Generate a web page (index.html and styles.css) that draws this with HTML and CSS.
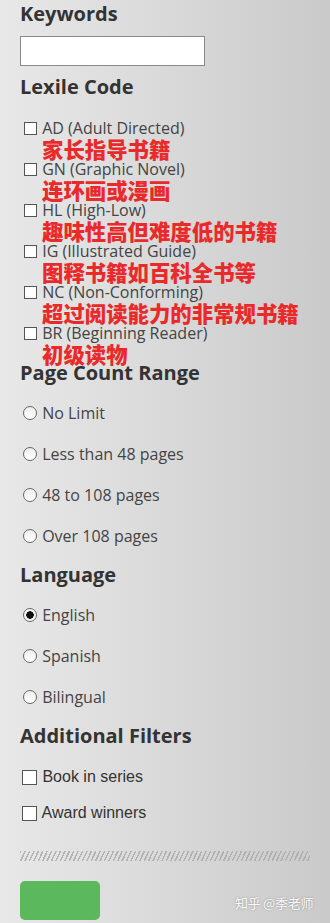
FILE: index.html
```html
<!DOCTYPE html>
<html lang="en">
<head>
  <meta charset="UTF-8">
  <title>Search Filters</title>
  <link rel="stylesheet" href="styles.css">
</head>
<body>
  <div class="sidebar">
    <h2 class="heading">Keywords</h2>
    <input type="text" class="keywords">

    <h2 class="heading lexile-heading">Lexile Code</h2>
    <div class="lexile-list">
      <label class="opt"><input type="checkbox" class="box"> AD (Adult Directed)</label>
      <p class="note">家长指导书籍</p>
      <label class="opt"><input type="checkbox" class="box"> GN (Graphic Novel)</label>
      <p class="note">连环画或漫画</p>
      <label class="opt"><input type="checkbox" class="box"> HL (High-Low)</label>
      <p class="note">趣味性高但难度低的书籍</p>
      <label class="opt"><input type="checkbox" class="box"> IG (Illustrated Guide)</label>
      <p class="note">图释书籍如百科全书等</p>
      <label class="opt"><input type="checkbox" class="box"> NC (Non-Conforming)</label>
      <p class="note">超过阅读能力的非常规书籍</p>
      <label class="opt"><input type="checkbox" class="box"> BR (Beginning Reader)</label>
      <p class="note">初级读物</p>
    </div>

    <h2 class="heading">Page Count Range</h2>
    <div class="radio-list">
      <label class="radio-row"><input type="radio" name="pages" class="dot"> No Limit</label>
      <label class="radio-row"><input type="radio" name="pages" class="dot"> Less than 48 pages</label>
      <label class="radio-row"><input type="radio" name="pages" class="dot"> 48 to 108 pages</label>
      <label class="radio-row"><input type="radio" name="pages" class="dot"> Over 108 pages</label>
    </div>

    <h2 class="heading">Language</h2>
    <div class="radio-list">
      <label class="radio-row"><input type="radio" name="lang" class="dot" checked> English</label>
      <label class="radio-row"><input type="radio" name="lang" class="dot"> Spanish</label>
      <label class="radio-row"><input type="radio" name="lang" class="dot"> Bilingual</label>
    </div>

    <h2 class="heading">Additional Filters</h2>
    <div class="extra-list">
      <label class="extra-row"><input type="checkbox" class="box big"> Book in series</label>
      <label class="extra-row"><input type="checkbox" class="box big"> Award winners</label>
    </div>

    <div class="hatch"></div>
    <button class="btn-go"></button>

    <span class="watermark">知乎 @季老师</span>
  </div>
</body>
</html>
```

FILE: styles.css
```css
body {
  margin: 0;
  font-family: "Open Sans", Arial, sans-serif;
}

.sidebar {
  position: relative;
  width: 330px;
  height: 923px;
  box-sizing: border-box;
  padding: 0 20px;
  background: linear-gradient(to right, #e8e8e8, #cacaca);
  overflow: hidden;
}

.heading {
  margin: 0;
  font-size: 20px;
  line-height: 28px;
  font-weight: bold;
  color: #333;
}

.keywords {
  display: block;
  width: 185px;
  height: 30px;
  box-sizing: border-box;
  margin: 8px 0 7px;
  border: 1px solid #8a8a8a;
  background: white;
}

.lexile-list {
  margin: 17px 0 -5px;
  padding-left: 4px;
}

.opt {
  display: flex;
  align-items: center;
  height: 20px;
  font-size: 16px;
  color: #444;
  white-space: pre;
}

.note {
  margin: 0 0 0 18px;
  height: 21px;
  line-height: 21px;
  font-family: "Noto Sans CJK SC", sans-serif;
  font-size: 21.4px;
  font-weight: 900;
  color: #ea2a2a;
}

.box {
  appearance: none;
  width: 13px;
  height: 13px;
  margin: 0 1px 0 0;
  border: 1px solid #555;
  background: white;
  flex: none;
}

.box.big {
  width: 15px;
  height: 15px;
}

.radio-list {
  margin: 5px 0;
  padding-left: 3px;
}

.radio-row {
  display: flex;
  align-items: center;
  height: 41px;
  font-size: 16px;
  color: #444;
  white-space: pre;
}

.dot {
  appearance: none;
  width: 14px;
  height: 14px;
  margin: 0 1px 0 0;
  border: 1px solid #666;
  border-radius: 50%;
  background: linear-gradient(#eeeeee, #ffffff);
  flex: none;
}

.dot:checked {
  background: radial-gradient(circle, #111 0 3.5px, #fafafa 4px);
}

.extra-list {
  margin-top: 9px;
  padding-left: 2px;
}

.extra-row {
  display: flex;
  align-items: center;
  height: 36px;
  font-family: "Liberation Sans", Arial, sans-serif;
  font-size: 16px;
  color: #333;
  white-space: pre;
}

.hatch {
  margin-top: 20px;
  height: 10px;
  width: 290px;
  background: repeating-linear-gradient(115deg, #a9a9a9 0 1.5px, transparent 1.5px 4px);
  opacity: 0.8;
}

.btn-go {
  display: block;
  margin-top: 20px;
  width: 80px;
  height: 39px;
  border: none;
  border-radius: 5px;
  background: #5cb85c;
}

.watermark {
  position: absolute;
  left: 235px;
  top: 893px;
  font-family: "Noto Sans CJK SC", sans-serif;
  font-size: 13px;
  letter-spacing: -0.3px;
  color: #fafafa;
  text-shadow: 0 0 2px rgba(0,0,0,0.35);
}
```
